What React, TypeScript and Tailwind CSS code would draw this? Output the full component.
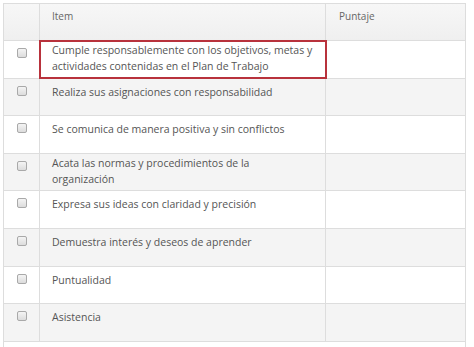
import React from 'react'

const items: string[][] = [
  ['Cumple responsablemente con los objetivos, metas y', 'actividades contenidas en el Plan de Trabajo'],
  ['Realiza sus asignaciones con responsabilidad'],
  ['Se comunica de manera positiva y sin conflictos'],
  ['Acata las normas y procedimientos de la', 'organización'],
  ['Expresa sus ideas con claridad y precisión'],
  ['Demuestra interés y deseos de aprender'],
  ['Puntualidad'],
  ['Asistencia'],
]

const Check: React.FC = () => (
  <span className="mx-auto mt-[7px] block h-[10px] w-[10px] rounded-[2px] border border-[#a9a9a9] bg-gradient-to-b from-[#f4f4f4] to-[#dcdcdc]" />
)

export default function App() {
  return (
    <div className="h-[347px] w-[474px] overflow-hidden bg-white pl-[3px] pt-[3px] font-['Open_Sans',sans-serif]">
      <table className="w-[462px] table-fixed border-collapse border border-[#dddddd] text-[#555555]">
        <colgroup>
          <col className="w-[36px]" />
          <col className="w-[286px]" />
          <col className="w-[140px]" />
        </colgroup>
        <thead>
          <tr className="h-[37px] bg-gradient-to-b from-[#f7f7f7] to-[#efefef]">
            <th className="border border-[#dddddd]" />
            <th className="border border-[#dddddd] px-[12px] pt-[5px] text-left align-top text-[10px] font-normal text-[#666666]">
              Item
            </th>
            <th className="border border-[#dddddd] px-[13px] pt-[5px] text-left align-top text-[10px] font-normal text-[#666666]">
              Puntaje
            </th>
          </tr>
        </thead>
        <tbody>
          {items.map((lines, i) => {
            const twoLines = lines.length > 1
            return (
              <tr key={i} className={i % 2 === 1 ? 'h-[37.6px] bg-[#f4f4f4]' : 'h-[37.6px] bg-white'}>
                <td className="border border-[#dddddd] align-top">
                  <Check />
                </td>
                <td
                  className={
                    (twoLines ? 'pt-[1px] ' : 'pt-[5px] ') +
                    (i === 0
                      ? 'whitespace-nowrap border border-[#dddddd] pl-[12px] pr-[4px] align-top text-[10.5px] leading-[16px] outline outline-2 -outline-offset-1 outline-[#b8323c]'
                      : 'whitespace-nowrap border border-[#dddddd] pl-[12px] pr-[4px] align-top text-[10.5px] leading-[16px]')
                  }
                >
                  {lines.map((line, j) => (
                    <span key={j} className="block">
                      {line}
                    </span>
                  ))}
                </td>
                <td className="border border-[#dddddd]" />
              </tr>
            )
          })}
          <tr className="h-[10px]">
            <td className="border-l border-[#dddddd]" />
            <td />
            <td />
          </tr>
        </tbody>
      </table>
    </div>
  )
}
